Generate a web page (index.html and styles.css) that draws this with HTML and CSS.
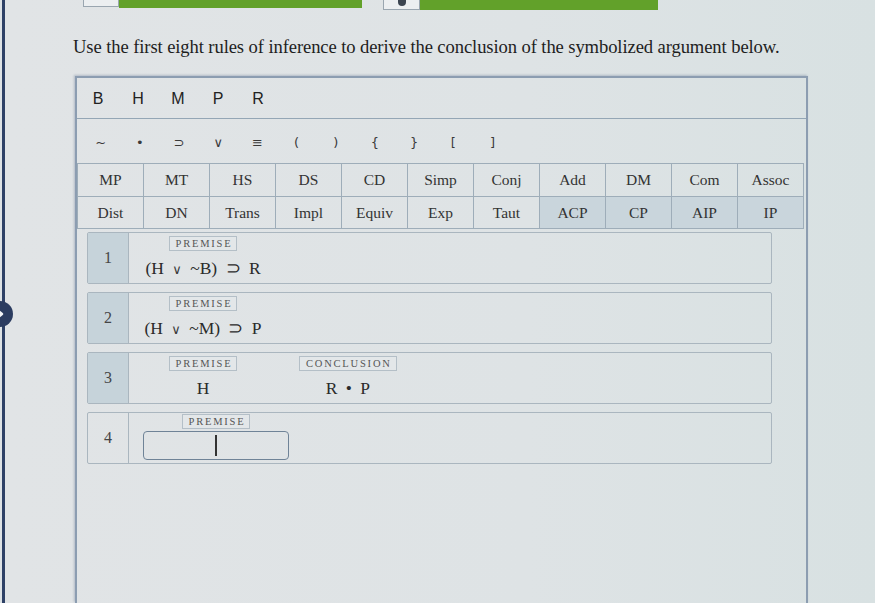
FILE: index.html
```html
<!DOCTYPE html>
<html>
<head>
<meta charset="utf-8">
<link rel="stylesheet" href="styles.css">
</head>
<body>
<div class="screen">
  <div class="topbar">
    <span class="tab"></span><span class="green g1"></span>
    <span class="tab tab2"><span class="dot"></span></span><span class="green g2"></span>
  </div>
  <p class="prompt">Use the first eight rules of inference to derive the conclusion of the symbolized argument below.</p>
  <div class="panel">
    <div class="letters"><span>B</span><span>H</span><span>M</span><span>P</span><span>R</span></div>
    <div class="symbols"><span>~</span><span>•</span><span>⊃</span><span>∨</span><span>≡</span><span>(</span><span>)</span><span>{</span><span>}</span><span>[</span><span>]</span></div>
    <div class="rules">
      <span>MP</span><span>MT</span><span>HS</span><span>DS</span><span>CD</span><span>Simp</span><span>Conj</span><span>Add</span><span>DM</span><span>Com</span><span>Assoc</span>
      <span>Dist</span><span>DN</span><span>Trans</span><span>Impl</span><span>Equiv</span><span>Exp</span><span>Taut</span><span class="shade">ACP</span><span class="shade">CP</span><span class="shade">AIP</span><span class="shade">IP</span>
    </div>
    <div class="proof">
      <div class="row">
        <div class="num shaded">1</div>
        <div class="content">
          <div class="cell"><span class="tag">Premise</span><span class="formula">(H <span class="op">∨</span> ~B) ⊃ R</span></div>
        </div>
      </div>
      <div class="row">
        <div class="num shaded">2</div>
        <div class="content">
          <div class="cell"><span class="tag">Premise</span><span class="formula">(H <span class="op">∨</span> ~M) ⊃ P</span></div>
        </div>
      </div>
      <div class="row">
        <div class="num shaded">3</div>
        <div class="content">
          <div class="cell"><span class="tag">Premise</span><span class="formula">H</span></div>
          <div class="cell concl"><span class="tag">Conclusion</span><span class="formula">R • P</span></div>
        </div>
      </div>
      <div class="row">
        <div class="num">4</div>
        <div class="content">
          <div class="cell entry"><span class="tag">Premise</span><div class="input"><span class="caret"></span></div></div>
        </div>
      </div>
    </div>
  </div>
</div>
<div class="nav-arrow"><svg width="10" height="12" viewBox="0 0 10 12"><path d="M1 1 L7 6 L1 11" fill="none" stroke="#f2f4f7" stroke-width="2.4" stroke-linecap="round" stroke-linejoin="round"/></svg></div>
</body>
</html>
```
FILE: styles.css
```css
html, body {
  margin: 0;
  padding: 0;
  height: 603px;
  overflow: hidden;
  background: #dde2e5;
}
body {
  position: relative;
  font-family: "Liberation Serif", "Times New Roman", serif;
  color: #2a2a2a;
}
.screen {
  margin-left: 2px;
  border-left: 3px solid #2e4166;
  height: 603px;
  background: linear-gradient(90deg, #e1e4e6 0%, #dee3e5 60%, #d8e1e2 100%);
}
.topbar {
  display: flex;
  align-items: flex-start;
  padding-left: 78px;
  height: 10px;
}
.tab {
  width: 36px;
  height: 7px;
  background: #eceff1;
  border: 1px solid #9aa6b0;
  border-top: none;
  box-sizing: border-box;
}
.tab2 {
  width: 37px;
  height: 10px;
  margin-left: 21px;
  display: flex;
  justify-content: center;
}
.dot {
  width: 8px;
  height: 6px;
  background: #3b4450;
  border-radius: 0 0 4px 4px;
}
.green {
  background: #62a12a;
}
.g1 { width: 243px; height: 8px; }
.g2 { width: 238px; height: 10px; }
.prompt {
  margin: 27px 0 0 68px;
  font-size: 18.6px;
  line-height: 20px;
  color: #1e1e1e;
  letter-spacing: -0.1px;
  white-space: nowrap;
}
.panel {
  margin: 19px 0 0 70px;
  width: 733px;
  height: 527px;
  box-sizing: border-box;
  border: 2px solid #8c9db1;
  border-bottom: none;
  box-shadow: -1px -1px 2px rgba(90, 110, 140, 0.35);
}
.letters {
  height: 41px;
  display: flex;
  align-items: center;
  padding: 2px 0 0 1px;
  box-sizing: border-box;
  border-bottom: 1px solid #94a6b5;
  font-family: "Liberation Sans", Arial, sans-serif;
  font-size: 16px;
  color: #222;
}
.letters span {
  width: 40px;
  text-align: center;
}
.symbols {
  height: 44px;
  display: flex;
  align-items: center;
  padding: 2px 0 0 4px;
  box-sizing: border-box;
  font-family: "DejaVu Sans", "Liberation Sans", sans-serif;
  font-size: 13px;
  color: #3a3a3a;
}
.symbols span {
  width: 39.2px;
  text-align: center;
}
.rules {
  display: grid;
  grid-template-columns: repeat(11, 66px);
  grid-template-rows: 33px 32px;
  border-top: 1px solid #9eadb9;
  border-left: 1px solid #9eadb9;
  width: 727px;
  box-sizing: border-box;
  font-size: 15.5px;
  color: #333;
}
.rules span {
  display: flex;
  align-items: center;
  justify-content: center;
  border-right: 1px solid #9eadb9;
  border-bottom: 1px solid #9eadb9;
}
.rules .shade {
  background: #c9d5dc;
}
.proof {
  margin: 3px 0 0 10px;
  width: 685px;
  display: flex;
  flex-direction: column;
  gap: 8px;
}
.row {
  height: 52px;
  box-sizing: border-box;
  border: 1px solid #aab6bf;
  border-radius: 2px;
  display: flex;
}
.num {
  width: 40px;
  flex: none;
  display: flex;
  align-items: center;
  justify-content: center;
  border-right: 1px solid #aab6bf;
  font-size: 16px;
  color: #454545;
}
.num.shaded {
  background: #c6d3da;
}
.content {
  display: flex;
  gap: 36px;
  padding: 3px 0 0 14px;
}
.cell {
  min-width: 120px;
  display: flex;
  flex-direction: column;
  align-items: center;
}
.cell.concl {
  min-width: 0;
}
.tag {
  font-size: 10.5px;
  line-height: 11px;
  text-transform: uppercase;
  letter-spacing: 1.8px;
  padding: 1px 4px 1px 6px;
  border: 1px solid #b4bfc7;
  background: #e3e7e9;
  color: #555;
}
.formula {
  margin-top: 7px;
  font-size: 17.5px;
  line-height: 20px;
  color: #2b2b2b;
  white-space: pre;
  word-spacing: 4px;
}
.op {
  font-family: "DejaVu Sans", sans-serif;
  font-size: 13px;
  color: #3a3a3a;
}
.entry .tag {
  margin-top: -2px;
}
.input {
  margin-top: 2px;
  width: 146px;
  height: 29px;
  box-sizing: border-box;
  border: 1.5px solid #6f8397;
  border-radius: 4px;
  display: flex;
  align-items: center;
  justify-content: center;
}
.caret {
  width: 1.5px;
  height: 21px;
  background: #333;
}
.nav-arrow {
  position: absolute;
  left: -13px;
  top: 301px;
  width: 26px;
  height: 26px;
  border-radius: 50%;
  background: #2b3c60;
  display: flex;
  align-items: center;
  justify-content: flex-end;
  padding-right: 8px;
  box-sizing: border-box;
}
.nav-arrow svg {
  display: block;
}
```
